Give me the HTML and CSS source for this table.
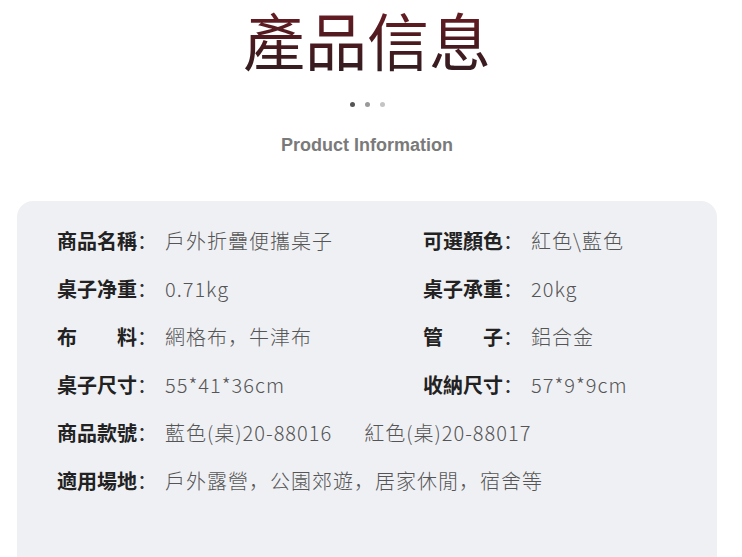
FILE: index.html
```html
<!DOCTYPE html>
<html>
<head>
	<meta charset="utf-8">
	<title>產品信息</title>
	<link rel="stylesheet" href="styles.css">
</head>
<body>
	<div class="head">
		<h1 class="title">產品信息</h1>
		<div class="dots">
			<span class="dot d1"></span>
			<span class="dot d2"></span>
			<span class="dot d3"></span>
		</div>
		<div class="subtitle">Product Information</div>
	</div>

	<div class="card">
		<div class="row">
			<div class="item"><span class="label">商品名稱</span><span class="colon">：</span><span class="value">戶外折疊便攜桌子</span></div>
			<div class="item"><span class="label">可選顏色</span><span class="colon">：</span><span class="value">紅色\藍色</span></div>
		</div>
		<div class="row">
			<div class="item"><span class="label">桌子净重</span><span class="colon">：</span><span class="value">0.71kg</span></div>
			<div class="item"><span class="label">桌子承重</span><span class="colon">：</span><span class="value">20kg</span></div>
		</div>
		<div class="row">
			<div class="item"><span class="label">布料</span><span class="colon">：</span><span class="value">網格布，牛津布</span></div>
			<div class="item"><span class="label">管子</span><span class="colon">：</span><span class="value">鋁合金</span></div>
		</div>
		<div class="row">
			<div class="item"><span class="label">桌子尺寸</span><span class="colon">：</span><span class="value">55*41*36cm</span></div>
			<div class="item"><span class="label">收納尺寸</span><span class="colon">：</span><span class="value">57*9*9cm</span></div>
		</div>
		<div class="row">
			<div class="item wide"><span class="label">商品款號</span><span class="colon">：</span><span class="value">藍色(桌)20-88016<span class="gap"></span>紅色(桌)20-88017</span></div>
		</div>
		<div class="row">
			<div class="item wide"><span class="label">適用場地</span><span class="colon">：</span><span class="value">戶外露營，公園郊遊，居家休閒，宿舍等</span></div>
		</div>
	</div>
</body>
</html>
```

FILE: styles.css
```css
body {
	margin: 0;
	padding: 0;
	background-color: #ffffff;
	font-family: "Noto Sans CJK SC", "Noto Sans", sans-serif;
	overflow: hidden;
}

.head {
	text-align: center;
	padding-right: 8px;
	padding-top: 0;
}

.title {
	margin: 0;
	font-size: 62px;
	line-height: 78px;
	font-weight: 400;
	color: #561a20;
	background: linear-gradient(180deg, #701d24 0%, #4a1a1f 55%, #2e1e22 100%);
	-webkit-background-clip: text;
	background-clip: text;
	-webkit-text-fill-color: transparent;
}

.dots {
	display: flex;
	justify-content: center;
	gap: 10px;
	margin-top: 24px;
	height: 5px;
}

.dot {
	width: 5px;
	height: 5px;
	border-radius: 50%;
}

.d1 {
	background-color: #555555;
}

.d2 {
	background-color: #9a9a9a;
}

.d3 {
	background-color: #c4c4c4;
}

.subtitle {
	margin-top: 26px;
	font-family: "Liberation Sans", Arial, sans-serif;
	font-size: 18px;
	font-weight: bold;
	color: #7a7a7a;
	line-height: 24px;
}

.card {
	margin: 44px 25px 0 17px;
	padding: 15px 0 60px 40px;
	background-color: #eff0f4;
	border-radius: 16px 16px 0 0;
	min-height: 340px;
}

.row {
	display: grid;
	grid-template-columns: 366px 1fr;
	height: 48px;
	align-items: center;
}

.item {
	display: flex;
	font-size: 20px;
	white-space: nowrap;
}

.item.wide {
	grid-column: 1 / 3;
}

.label {
	width: 80px;
	font-weight: 700;
	color: #222222;
	text-align: justify;
	text-align-last: justify;
}

.colon {
	width: 20px;
	font-weight: 400;
	color: #333333;
}

.value {
	margin-left: 8px;
	font-weight: 300;
	letter-spacing: 1px;
	color: #555555;
}

.gap {
	display: inline-block;
	width: 32px;
}
```
